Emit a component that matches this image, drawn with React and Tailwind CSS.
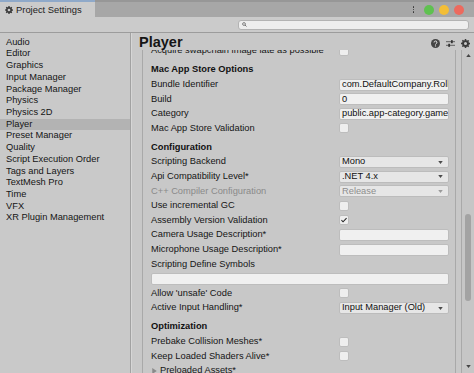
import React from 'react';

const font = { fontFamily: '"Liberation Sans", Arial, sans-serif' };

const categories = [
  'Audio', 'Editor', 'Graphics', 'Input Manager', 'Package Manager', 'Physics', 'Physics 2D',
  'Player', 'Preset Manager', 'Quality', 'Script Execution Order', 'Tags and Layers',
  'TextMesh Pro', 'Time', 'VFX', 'XR Plugin Management',
];

const Gear = ({ className = 'h-[9px] w-[9px]' }) => (
  <svg viewBox="0 0 16 16" className={className} fill="#3c3c3c">
    <path d="M6.8 0h2.4l.4 2.1c.5.2 1 .4 1.4.7l1.8-1.2 1.7 1.7-1.2 1.8c.3.4.5.9.7 1.4l2.1.4v2.4l-2.1.4c-.2.5-.4 1-.7 1.4l1.2 1.8-1.7 1.7-1.8-1.2c-.4.3-.9.5-1.4.7L9.2 16H6.8l-.4-2.1c-.5-.2-1-.4-1.4-.7l-1.8 1.2-1.7-1.7 1.2-1.8c-.3-.4-.5-.9-.7-1.4L0 9.2V6.8l2.1-.4c.2-.5.4-1 .7-1.4L1.6 3.2l1.7-1.7 1.8 1.2c.4-.3.9-.5 1.4-.7zM8 5.3A2.7 2.7 0 1 0 8 10.7 2.7 2.7 0 1 0 8 5.3z" />
  </svg>
);

const Field = ({ value = '', muted }) => (
  <div className="flex h-[12px] w-[110px] items-center overflow-hidden rounded-[2px] border border-[#bdbdbd] bg-[#f0f0f0] pl-[2px] whitespace-nowrap">
    <span className={muted ? 'text-[#8a8a8a]' : 'text-[#111]'}>{value}</span>
  </div>
);

const Dropdown = ({ value, muted }) => (
  <div className="flex h-[12px] w-[110px] items-center justify-between rounded-[2px] border border-[#bcbcbc] bg-[#e6e6e6] pl-[2px] pr-[5px]">
    <span className={muted ? 'text-[#8d8d8d]' : 'text-[#111]'}>{value}</span>
    <svg viewBox="0 0 6 4" className="h-[3px] w-[5px]">
      <path d="M0 0h6L3 4z" fill={muted ? '#9a9a9a' : '#4a4a4a'} />
    </svg>
  </div>
);

const Check = ({ checked }) => (
  <div className="flex h-[10px] w-[10px] items-center justify-center rounded-[2px] border border-[#bdbdbd] bg-[#eeeeee]">
    {checked && (
      <svg viewBox="0 0 10 10" className="h-[8px] w-[8px]">
        <path d="M1.8 5.2l2 2 4.4-4.6" stroke="#222" strokeWidth="1.3" fill="none" />
      </svg>
    )}
  </div>
);

const Row = ({ label, children, muted }) => (
  <div className="flex h-[14.6px] items-center">
    <div className={`w-[188px] whitespace-nowrap ${muted ? 'text-[#8a8a8a]' : 'text-[#151515]'}`}>{label}</div>
    <div className="flex flex-1 items-center">{children}</div>
  </div>
);

const Header = ({ children }) => (
  <div className="mt-[4.5px] flex h-[14.6px] items-center font-bold text-[#111]">{children}</div>
);

export default function App() {
  return (
    <div style={font} className="flex h-[373px] w-[474px] flex-col overflow-hidden bg-[#c8c8c8] text-[9.3px] leading-none">
      {/* title bar */}
      <div className="flex h-[17px] items-stretch border-t-2 border-[#979797] bg-[#a7a7a7]">
        <div className="-mt-[2px] flex w-[95px] items-center gap-[3px] border-t-2 border-[#8fa9c9] bg-[#cbcbcb] pl-[5px]">
          <Gear className="h-[8px] w-[8px]" />
          <span className="text-[9.4px] text-[#1c1c1c]">Project Settings</span>
        </div>
        <div className="flex flex-1 items-center justify-end gap-[5px] pr-[10px]">
          <div className="mr-[5px] flex flex-col gap-[1px]">
            <span className="h-[1.5px] w-[1.5px] rounded-full bg-[#333]" />
            <span className="h-[1.5px] w-[1.5px] rounded-full bg-[#333]" />
            <span className="h-[1.5px] w-[1.5px] rounded-full bg-[#333]" />
          </div>
          <span className="h-[10px] w-[10px] rounded-full bg-[#5fc150]" />
          <span className="h-[10px] w-[10px] rounded-full bg-[#f3be37]" />
          <span className="h-[10px] w-[10px] rounded-full bg-[#ec6a5e]" />
        </div>
      </div>

      {/* toolbar */}
      <div className="flex h-[16px] items-center justify-end border-b border-[#9c9c9c] bg-[#cbcbcb] pr-[5px]">
        <div className="flex h-[10px] w-[231px] items-center rounded-[3px] border border-[#b3b3b3] bg-[#eeeeee] pl-[3px]">
          <svg viewBox="0 0 10 10" className="h-[5px] w-[5px]">
            <circle cx="4" cy="4" r="2.8" stroke="#555" strokeWidth="1.4" fill="none" />
            <path d="M6 6l3 3" stroke="#555" strokeWidth="1.6" />
          </svg>
        </div>
      </div>

      {/* main */}
      <div className="flex min-h-0 flex-1">
        <div className="w-[131px] border-r border-[#a2a2a2] bg-[#c9c9c9] pt-[3.5px]">
          {categories.map((c) => (
            <div
              key={c}
              className={`flex h-[11.73px] items-center pl-[6px] whitespace-nowrap text-[#151515] ${c === 'Player' ? 'bg-[#b3b3b3]' : ''}`}
            >
              {c}
            </div>
          ))}
        </div>
        <div className="w-[1px] bg-[#d6d6d6]" />

        <div className="flex min-w-0 flex-1 flex-col">
          <div className="relative z-10 flex h-[17px] items-end justify-between bg-[#c8c8c8] pl-[7px] pr-[4px]">
            <span className="pb-[1px] text-[14.5px] font-bold leading-none text-[#151515]">Player</span>
            <div className="mb-[2px] flex items-center gap-[6px]">
              <svg viewBox="0 0 10 10" className="h-[9px] w-[9px]">
                <circle cx="5" cy="5" r="5" fill="#454545" />
                <path d="M3.4 3.9a1.6 1.6 0 1 1 2.2 1.4c-.4.2-.6.4-.6.9" stroke="#ddd" strokeWidth="1.1" fill="none" />
                <circle cx="5" cy="7.7" r=".7" fill="#ddd" />
              </svg>
              <svg viewBox="0 0 10 10" className="h-[9px] w-[9px]">
                <path d="M0 3h10M0 7h10" stroke="#555" strokeWidth="1" />
                <rect x="5.5" y="1.3" width="2" height="3.4" fill="#333" />
                <rect x="2.5" y="5.3" width="2" height="3.4" fill="#333" />
              </svg>
              <Gear />
            </div>
          </div>

          <div className="flex min-h-0 flex-1 pl-[10px]">
            <div className="min-w-0 flex-1 overflow-hidden border-x border-[#a9a9a9] pl-[8px] pr-[4px]">
              <div className="-mt-[6.4px]">
                <Row label="Acquire swapchain image late as possible">
                  <Check />
                </Row>
                <Header>Mac App Store Options</Header>
                <Row label="Bundle Identifier"><Field value="com.DefaultCompany.Roll" /></Row>
                <Row label="Build"><Field value="0" /></Row>
                <Row label="Category"><Field value="public.app-category.games" /></Row>
                <Row label="Mac App Store Validation"><Check /></Row>
                <Header>Configuration</Header>
                <Row label="Scripting Backend"><Dropdown value="Mono" /></Row>
                <Row label="Api Compatibility Level*"><Dropdown value=".NET 4.x" /></Row>
                <Row label="C++ Compiler Configuration" muted><Dropdown value="Release" muted /></Row>
                <Row label="Use incremental GC"><Check /></Row>
                <Row label="Assembly Version Validation"><Check checked /></Row>
                <Row label="Camera Usage Description*"><Field /></Row>
                <Row label="Microphone Usage Description*"><Field /></Row>
                <Row label="Scripting Define Symbols" />
                <div className="flex h-[14.6px] items-center">
                  <div className="h-[12px] w-[298px] rounded-[2px] border border-[#bdbdbd] bg-[#f0f0f0]" />
                </div>
                <Row label="Allow 'unsafe' Code"><Check /></Row>
                <Row label="Active Input Handling*"><Dropdown value="Input Manager (Old)" /></Row>
                <Header>Optimization</Header>
                <Row label="Prebake Collision Meshes*"><Check /></Row>
                <Row label="Keep Loaded Shaders Alive*"><Check /></Row>
                <div className="flex h-[14.6px] items-center gap-[3px] pl-[1px] text-[#151515]">
                  <svg viewBox="0 0 6 8" className="h-[6px] w-[5px]"><path d="M0 0l6 4-6 4z" fill="#8a8a8a" /></svg>
                  <span>Preloaded Assets*</span>
                </div>
              </div>
            </div>
            <div className="w-[5px]" />
            <div className="flex w-[13px] flex-col items-center border-l border-[#a9a9a9] bg-[#c6c6c6] pt-[4px] pb-[5px]">
              <svg viewBox="0 0 6 4" className="h-[3px] w-[5px]"><path d="M0 4h6L3 0z" fill="#444" /></svg>
              <div className="mt-[157px] h-[87px] w-[6px] rounded-[3px] bg-[#a3a3a3]" />
              <div className="flex-1" />
              <svg viewBox="0 0 6 4" className="h-[3px] w-[5px]"><path d="M0 0h6L3 4z" fill="#444" /></svg>
            </div>
          </div>
        </div>
      </div>
    </div>
  );
}
